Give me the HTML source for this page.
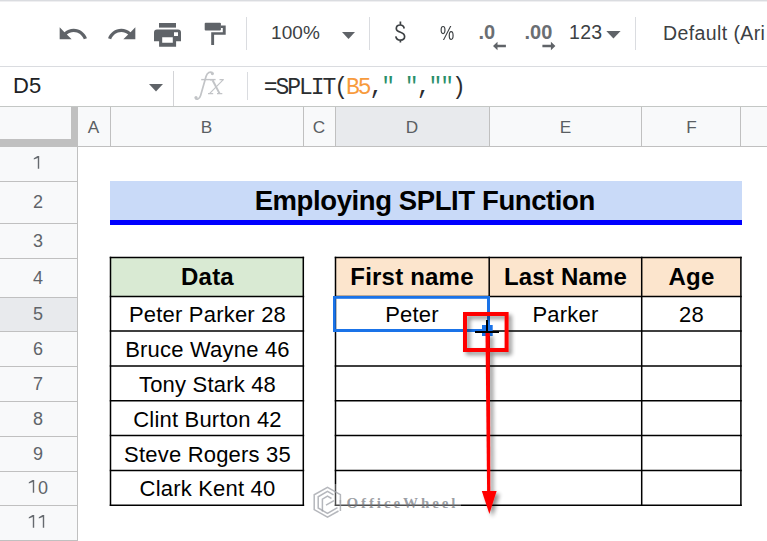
<!DOCTYPE html>
<html><head><meta charset="utf-8">
<style>
*{margin:0;padding:0;box-sizing:border-box}
html,body{width:767px;height:541px;overflow:hidden;background:#fff;position:relative;font-family:"Liberation Sans",sans-serif}
.a{position:absolute}
.t{position:absolute;white-space:nowrap;line-height:1}
.hl{position:absolute;height:1px;background:#c0c0c0}
.vl{position:absolute;width:1px;background:#c0c0c0}
.sep{position:absolute;width:1px;background:#dadce0}
.ch{position:absolute;top:107.6px;height:39px;font-size:17.2px;color:#5a5e63;text-align:center;line-height:39px}
.rh{position:absolute;left:0;width:76px;font-size:18px;color:#606469;text-align:center}
.one{display:inline-block;width:10px;height:12.6px;vertical-align:baseline;position:relative;top:-1.3px}
.cell{position:absolute;text-align:center;color:#000;white-space:nowrap}
</style></head><body>
<!-- toolbar -->
<div class="a" style="left:0;top:0;width:767px;height:1px;background:#dadce0"></div>
<div class="a" style="left:0;top:1px;width:767px;height:1px;background:#efeff1"></div>

<!-- undo -->
<svg class="a" style="left:57px;top:18px" width="32" height="32" viewBox="0 0 24 24"><path fill="#5f6368" d="M12.5 8c-2.65 0-5.05.99-6.9 2.6L2 7v9h9l-3.62-3.62c1.39-1.16 3.16-1.88 5.12-1.88 3.54 0 6.55 2.31 7.6 5.5l2.37-.78C21.08 11.03 17.15 8 12.5 8z"/></svg>
<!-- redo -->
<svg class="a" style="left:106px;top:18px" width="32" height="32" viewBox="0 0 24 24"><path fill="#5f6368" d="M18.4 10.6C16.55 8.99 14.15 8 11.5 8c-4.65 0-8.58 3.03-9.96 7.22L3.9 16c1.05-3.19 4.05-5.5 7.6-5.5 1.95 0 3.73.72 5.12 1.88L13 16h9V7l-3.6 3.6z"/></svg>
<!-- print -->
<svg class="a" style="left:0;top:0" width="767" height="66">
 <g fill="#5f6368">
  <rect x="159" y="23" width="17" height="4.6"/>
  <path d="M157 29.6h21a3 3 0 0 1 3 3V41.2h-4.9v5.5h-17v-5.5H154V32.6a3 3 0 0 1 3-3z M162.2 37.3v5.5h10.6v-5.5z M174 32.2v3.8h4v-3.8z" fill-rule="evenodd"/>
  <!-- paint format -->
  <rect x="204.7" y="22.8" width="16.2" height="7.7" rx="1"/>
  <path d="M220.9 25.4h4.8v9.3h-11.6v10.4h-2.9V32.2h11.6v-4.1h-1.9z"/>
  <!-- dropdown triangles -->
  <path d="M342 32h13l-6.5 7z"/>
  <path d="M606.3 31h14.3l-7.15 7.5z"/>
 </g>
</svg>
<div class="sep" style="left:246px;top:17px;height:33px"></div>
<div class="t" style="left:271px;top:23px;font-size:19px;letter-spacing:0.1px;color:#3c4043">100%</div>
<div class="sep" style="left:369px;top:17px;height:33px"></div>
<svg class="a" style="left:0;top:0" width="767" height="66"><path fill="none" stroke="#3c4043" stroke-width="1.7" d="M404.2 28.5C403.8 26.3 402.3 25 400.2 25C397.8 25 396.3 26.5 396.3 28.5C396.3 30.8 398.3 31.6 400.5 32.3C403 33.1 404.6 34.2 404.6 36.6C404.6 38.9 403 40.2 400.5 40.2C397.9 40.2 396.2 38.8 395.8 36.4M400.4 21.6V25M400.4 40.2V42.4"/></svg>
<div class="t" style="left:439.5px;top:23px;font-size:20px;transform:scaleX(0.8);transform-origin:0 0;color:#3c4043">%</div>
<div class="t" style="left:478.5px;top:22px;font-size:20px;font-weight:bold;-webkit-text-stroke:0;color:#6a6e73">.0</div>
<div class="t" style="left:524.5px;top:22px;font-size:20px;font-weight:bold;color:#6a6e73">.00</div>
<svg class="a" style="left:0;top:0" width="767" height="66">
  <path fill="#5f6368" d="M493 46l4.5-4.3v3h8.4v2.6h-8.4v3z"/>
  <path fill="#5f6368" d="M555.4 46l-4.5-4.3v3h-8.5v2.6h8.5v3z"/>
</svg>
<div class="t" style="left:569px;top:22.5px;font-size:19.5px;letter-spacing:0.3px;color:#3c4043">123</div>
<div class="sep" style="left:635px;top:17px;height:33px"></div>
<div class="t" style="left:663px;top:24px;font-size:19.5px;letter-spacing:0.4px;color:#3c4043">Default (Ari</div>
<div class="a" style="left:0;top:66px;width:767px;height:1px;background:#dadce0"></div>

<!-- formula bar -->
<div class="t" style="left:13px;top:75px;font-size:22px;color:#202124">D5</div>
<svg class="a" style="left:148px;top:83px" width="16" height="9"><path fill="#5f6368" d="M1 1h14l-7 7.5z"/></svg>
<div class="sep" style="left:173px;top:71px;height:35px;background:#d3d4d7"></div>
<svg class="a" style="left:0;top:60px" width="260" height="50"><g transform="translate(0,-60)" fill="none" stroke="#c2c4c7">
<path stroke-width="1.7" d="M195.2 98.2C196.5 99.9 199.4 99.6 200.6 95.5L206.1 76.2C207.2 72.4 210.2 71.3 212.4 72.6"/>
<circle cx="196" cy="97.6" r="1.6" fill="#c2c4c7" stroke="none"/>
<circle cx="212.4" cy="73.6" r="1.6" fill="#c2c4c7" stroke="none"/>
<path stroke-width="1.4" d="M201.2 79.6H215.6"/>
<path stroke-width="2" d="M212.6 80.2L219.5 93.4"/>
<path stroke-width="1.2" d="M223.3 79.7L209.5 93.6M208 93.6H213.2M217 93.6H222.3M219.5 79.7H223.8M210 79.8H213.8"/>
</g></svg>
<div class="sep" style="left:247px;top:72px;height:28px"></div>
<div class="t" style="left:263.8px;top:76.5px;font-family:'Liberation Mono',monospace;font-size:23px;letter-spacing:-2.05px;color:#2b2d30">=SPLIT(<span style="color:#f79b3d">B5</span>,<span style="color:#2a8f6a">" "</span>,<span style="color:#2a8f6a">""</span>)</div>
<div class="a" style="left:0;top:106px;width:767px;height:1px;background:#c4c7c5"></div>

<!-- column headers -->
<div class="a" style="left:0;top:107px;width:767px;height:39px;background:#f8f9fa"></div>
<div class="a" style="left:335px;top:107px;width:154px;height:39px;background:#e8eaed"></div>
<div class="ch" style="left:77px;width:33px">A</div>
<div class="ch" style="left:110px;width:193px">B</div>
<div class="ch" style="left:303px;width:32px">C</div>
<div class="ch" style="left:335px;width:154px">D</div>
<div class="ch" style="left:489px;width:153px">E</div>
<div class="ch" style="left:642px;width:99px">F</div>
<div class="vl" style="left:110px;top:107px;height:39px"></div>
<div class="vl" style="left:303px;top:107px;height:39px"></div>
<div class="vl" style="left:335px;top:107px;height:39px"></div>
<div class="vl" style="left:489px;top:107px;height:39px"></div>
<div class="vl" style="left:641px;top:107px;height:39px"></div>
<div class="vl" style="left:740px;top:107px;height:39px"></div>
<div class="a" style="left:0;top:146px;width:767px;height:1px;background:#c0c0c0"></div>
<!-- freeze bars -->
<div class="a" style="left:71px;top:107px;width:6px;height:39px;background:#c0c0c0"></div>
<div class="a" style="left:0;top:139px;width:77px;height:7px;background:#c0c0c0"></div>

<!-- row headers -->
<div class="a" style="left:0;top:147px;width:77px;height:394px;background:#f8f9fa"></div>
<div class="a" style="left:0;top:297px;width:77px;height:34px;background:#e8eaed"></div>
<div class="a" style="left:77px;top:107px;width:1px;height:434px;background:#c0c0c0"></div>
<div class="rh" style="top:147px;height:34px;line-height:34px"><svg class="one" viewBox="0 0 10 12.4"><path fill="#666a6f" d="M4.8 0H6.2V12.6H4.8V1.9L0.8 3.4V2.1L4.5 0z"/></svg></div>
<div class="a" style="left:0;top:181px;width:77px;height:1px;background:#c0c0c0"></div>
<div class="rh" style="top:182px;height:41px;line-height:41px">2</div>
<div class="a" style="left:0;top:223px;width:77px;height:1px;background:#c0c0c0"></div>
<div class="rh" style="top:224px;height:34px;line-height:34px">3</div>
<div class="a" style="left:0;top:258px;width:77px;height:1px;background:#c0c0c0"></div>
<div class="rh" style="top:259px;height:38px;line-height:38px">4</div>
<div class="a" style="left:0;top:297px;width:77px;height:1px;background:#c0c0c0"></div>
<div class="rh" style="top:298px;height:33px;line-height:33px">5</div>
<div class="a" style="left:0;top:331px;width:77px;height:1px;background:#c0c0c0"></div>
<div class="rh" style="top:332px;height:34px;line-height:34px">6</div>
<div class="a" style="left:0;top:366px;width:77px;height:1px;background:#c0c0c0"></div>
<div class="rh" style="top:367px;height:34px;line-height:34px">7</div>
<div class="a" style="left:0;top:401px;width:77px;height:1px;background:#c0c0c0"></div>
<div class="rh" style="top:402px;height:34px;line-height:34px">8</div>
<div class="a" style="left:0;top:436px;width:77px;height:1px;background:#c0c0c0"></div>
<div class="rh" style="top:437px;height:34px;line-height:34px">9</div>
<div class="a" style="left:0;top:471px;width:77px;height:1px;background:#c0c0c0"></div>
<div class="rh" style="top:472px;height:33px;line-height:33px"><svg class="one" viewBox="0 0 10 12.4"><path fill="#666a6f" d="M4.8 0H6.2V12.6H4.8V1.9L0.8 3.4V2.1L4.5 0z"/></svg>0</div>
<div class="a" style="left:0;top:505px;width:77px;height:1px;background:#c0c0c0"></div>
<div class="rh" style="top:506px;height:34px;line-height:34px"><svg class="one" viewBox="0 0 10 12.4"><path fill="#666a6f" d="M4.8 0H6.2V12.6H4.8V1.9L0.8 3.4V2.1L4.5 0z"/></svg><svg class="one" viewBox="0 0 10 12.4"><path fill="#666a6f" d="M4.8 0H6.2V12.6H4.8V1.9L0.8 3.4V2.1L4.5 0z"/></svg></div>
<div class="a" style="left:0;top:540px;width:77px;height:1px;background:#c0c0c0"></div>


<!-- title banner -->
<div class="a" style="left:110px;top:181px;width:631.5px;height:39px;background:#c9daf8"></div>
<div class="a" style="left:110px;top:219.5px;width:631.5px;height:5.5px;background:#0000ff"></div>
<div class="t" style="left:109px;top:186.5px;width:631.5px;text-align:center;font-size:27.5px;letter-spacing:-0.4px;font-weight:bold;color:#000">Employing SPLIT Function</div>

<!-- table fills -->
<div class="a" style="left:110px;top:258px;width:193px;height:38px;background:#d9ead3"></div>
<div class="a" style="left:335px;top:258px;width:406px;height:38px;background:#fce5cd"></div>

<!-- table texts -->
<div class="cell" style="left:111px;top:263px;width:193px;font-size:24px;font-weight:bold;line-height:27px;letter-spacing:0.2px">Data</div>
<div class="cell" style="left:335px;top:263px;width:154px;font-size:24px;font-weight:bold;line-height:27px;letter-spacing:0.2px">First name</div>
<div class="cell" style="left:489px;top:263px;width:153px;font-size:24px;font-weight:bold;line-height:27px;letter-spacing:0.2px">Last Name</div>
<div class="cell" style="left:642px;top:263px;width:99px;font-size:24px;font-weight:bold;line-height:27px;letter-spacing:0.2px">Age</div>

<div class="cell" style="left:111px;top:302px;width:193px;font-size:22px;line-height:25px;letter-spacing:0.2px">Peter Parker 28</div>
<div class="cell" style="left:111px;top:337px;width:193px;font-size:22px;line-height:25px;letter-spacing:0.2px">Bruce Wayne 46</div>
<div class="cell" style="left:111px;top:372px;width:193px;font-size:22px;line-height:25px;letter-spacing:0.2px">Tony Stark 48</div>
<div class="cell" style="left:111px;top:407px;width:193px;font-size:22px;line-height:25px;letter-spacing:0.2px">Clint Burton 42</div>
<div class="cell" style="left:111px;top:442px;width:193px;font-size:22px;line-height:25px;letter-spacing:0.2px">Steve Rogers 35</div>
<div class="cell" style="left:111px;top:476px;width:193px;font-size:22px;line-height:25px;letter-spacing:0.2px">Clark Kent 40</div>

<div class="cell" style="left:335px;top:302px;width:154px;font-size:22px;line-height:25px;letter-spacing:0.2px">Peter</div>
<div class="cell" style="left:489px;top:302px;width:153px;font-size:22px;line-height:25px;letter-spacing:0.2px">Parker</div>
<div class="cell" style="left:642px;top:302px;width:99px;font-size:22px;line-height:25px;letter-spacing:0.2px">28</div>

<!-- table borders -->
<svg class="a" style="left:0;top:0" width="767" height="541">
 <g stroke="#000" stroke-width="1.5" fill="none" stroke-linecap="square">
  <path d="M110.5 257.6H303.4 M110.5 296.4H303.4 M110.5 331H303.4 M110.5 366H303.4 M110.5 400.8H303.4 M110.5 435.6H303.4 M110.5 470.6H303.4 M110.5 505.3H303.4"/>
  <path d="M110.5 257.6V505.3 M303.3 257.6V505.3"/>
  <path d="M335.5 257.6H741 M335.5 296.4H741 M335.5 331H741 M335.5 366H741 M335.5 400.8H741 M335.5 435.6H741 M335.5 470.6H741 M335.5 505.3H741"/>
  <path d="M335.5 257.6V505.3 M489.2 257.6V505.3 M641.7 257.6V505.3 M740.9 257.6V505.3"/>
 </g>
</svg>

<!-- watermark -->
<div class="a" style="left:309px;top:484px;width:152px;height:36px;background:rgba(255,255,255,0.3)"></div>
<svg class="a" style="left:0;top:0" width="767" height="541">
 <g fill="none" stroke="#9c9fa5" stroke-opacity="0.75" stroke-width="1.5">
  <path d="M340.4 503.5V494.6L327.5 487.3 314.2 494.8V509.6L327.5 517.2 338.5 511"/>
  <path d="M333.5 494.8L327.5 491.4 318.2 496.8V508L327.5 513.3 337.5 507.6"/>
  <path d="M331.5 498.5L327.5 496.2 322.4 499.2V511.5M326 505.2L334 500.6"/>
  <path d="M340.4 500V511"/>
 </g>
</svg>
<div class="t" style="left:346.5px;top:495.5px;font-family:'Liberation Serif',serif;font-size:15px;letter-spacing:2.9px;color:rgba(110,114,122,0.7);font-weight:bold">OfficeWheel</div>

<!-- selection -->
<svg class="a" style="left:0;top:0" width="767" height="541"><g fill="#1a73e8">
<rect x="333" y="296" width="157" height="2.8"/>
<rect x="333" y="329" width="157" height="3"/>
<rect x="333" y="296" width="2.8" height="36"/>
<rect x="487" y="296" width="3" height="36"/>
<rect x="482" y="325" width="10.7" height="11"/>
</g></svg>

<!-- red annotation -->
<svg class="a" style="left:0;top:0" width="767" height="541">
 <defs><filter id="sh" x="-50%" y="-50%" width="200%" height="200%"><feGaussianBlur in="SourceAlpha" stdDeviation="2"/><feOffset dx="3" dy="3"/><feComponentTransfer><feFuncA type="linear" slope="0.45"/></feComponentTransfer><feMerge><feMergeNode/><feMergeNode in="SourceGraphic"/></feMerge></filter></defs>
 <g filter="url(#sh)">
  <rect x="465" y="314" width="41.6" height="36" fill="none" stroke="#ff0000" stroke-width="4"/>
  <path d="M485.5 333L487.1 491.1H490.3L489.8 333z" fill="#ff0000"/>
  <path d="M481.8 491.1H496.6L489.4 514z" fill="#ff0000"/>
 </g>
</svg>
<!-- cursor plus -->
<div class="a" style="left:475.3px;top:330.8px;width:24px;height:2.2px;background:#000"></div>
<div class="a" style="left:486.1px;top:320px;width:2px;height:13px;background:#000"></div>

</body></html>
